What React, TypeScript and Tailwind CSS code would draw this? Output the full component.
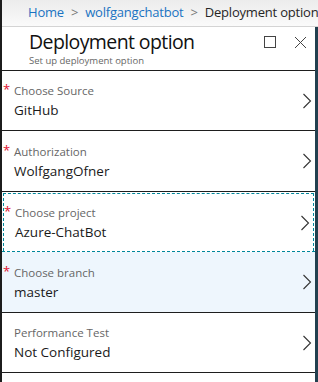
type Row = {
  label: string;
  value: string;
  required?: boolean;
  h: string;
  focused?: boolean;
  selected?: boolean;
};

const rows: Row[] = [
  { label: "Choose Source", value: "GitHub", required: true, h: "h-[60px]" },
  { label: "Authorization", value: "WolfgangOfner", required: true, h: "h-[61px]" },
  { label: "Choose project", value: "Azure-ChatBot", required: true, h: "h-[60px]", focused: true },
  { label: "Choose branch", value: "master", required: true, h: "h-[61px]", selected: true },
  { label: "Performance Test", value: "Not Configured", h: "h-[60px]" },
];

function Chevron() {
  return (
    <svg width="10" height="16" viewBox="0 0 10 16" className="mr-[3px] shrink-0 text-[#333]">
      <path d="M1.5 1 L8.5 8 L1.5 15" stroke="currentColor" strokeWidth="1.1" fill="none" />
    </svg>
  );
}

function OptionRow({ row }: { row: Row }) {
  return (
    <div
      className={`relative flex items-stretch ${row.h} ${
        row.focused ? "border-b border-dashed border-[#00879b]" : "border-b border-[#1e1e1e]"
      } ${row.selected ? "bg-[#eef6fd]" : "bg-white"}`}
    >
      <div
        className={`flex flex-1 items-center ${
          row.focused ? "mx-[1px] mt-[1px] border-x border-t border-dashed border-[#00879b]" : ""
        }`}
      >
        <div className={`relative flex flex-1 flex-col ${row.focused ? "pl-[11px]" : "pl-[12px]"}`}>
          {row.required && (
            <span
              className={`absolute top-[2px] text-[13px] leading-none text-[#e2112e] ${
                row.focused ? "left-[0px]" : "left-[1px]"
              }`}
            >
              *
            </span>
          )}
          <span className="text-[11.5px] leading-[19px] text-[#666]">{row.label}</span>
          <span className="text-[13.5px] leading-[20px] text-[#1a1a1a]">{row.value}</span>
        </div>
        <Chevron />
      </div>
    </div>
  );
}

export default function App() {
  return (
    <div
      className="flex h-[382px] w-[318px] overflow-hidden bg-white"
      style={{ fontFamily: '"Open Sans", "Noto Sans", sans-serif' }}
    >
      <div className="w-[2px] shrink-0 bg-[#1c1c1c]" />
      <div className="flex min-w-0 flex-1 flex-col">
        <div className="flex h-[27px] shrink-0 items-center whitespace-nowrap border-b border-[#d4d4d4] bg-gradient-to-b from-[#ececec] to-[#fafafa] pl-[26px] text-[13px] tracking-[-0.2px]">
          <span className="text-[#1a73c2]">Home</span>
          <span className="mx-[7px] text-[#777]">&gt;</span>
          <span className="text-[#1a73c2]">wolfgangchatbot</span>
          <span className="mx-[7px] text-[#777]">&gt;</span>
          <span className="text-[#262626]">Deployment option</span>
        </div>
        <div className="flex flex-1 flex-col border-r-[3px] border-[#22404f] bg-white">
          <div className="flex h-[44px] shrink-0 border-b border-[#1e1e1e] pl-[27px] pr-[8px]">
            <div className="flex flex-1 flex-col pt-[2px]">
              <span className="text-[19.5px] leading-[26px] tracking-[-0.6px] text-[#111]">Deployment option</span>
              <span className="text-[9.5px] leading-[12px] text-[#666]">Set up deployment option</span>
            </div>
            <div className="flex items-start gap-[18px] pt-[9px]">
              <div className="h-[12px] w-[12px] border border-[#444]" />
              <svg width="13" height="13" viewBox="0 0 13 13" className="text-[#444]">
                <path d="M1 1 L12 12 M12 1 L1 12" stroke="currentColor" strokeWidth="1" fill="none" />
              </svg>
            </div>
          </div>
          {rows.map((r) => (
            <OptionRow key={r.label} row={r} />
          ))}
        </div>
      </div>
    </div>
  );
}
